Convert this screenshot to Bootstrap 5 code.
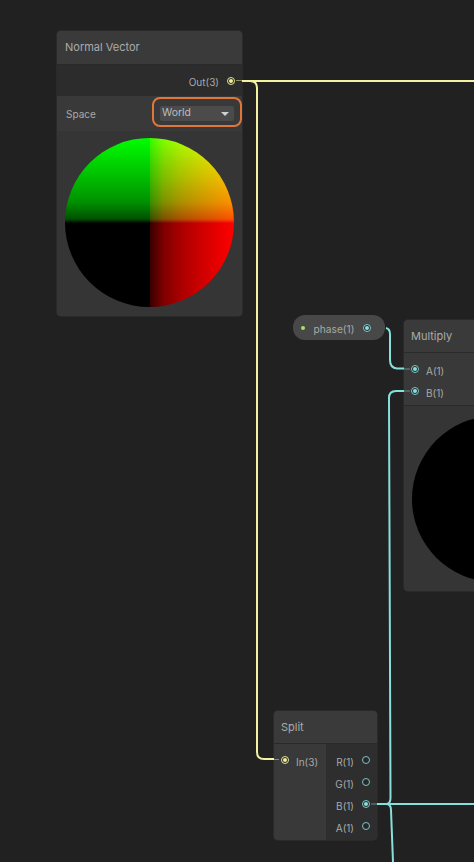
<!DOCTYPE html>
<html lang="en">
<head>
<meta charset="utf-8">
<title>Shader Graph</title>
<link href="https://cdn.jsdelivr.net/npm/bootstrap@5.3.0/dist/css/bootstrap.min.css" rel="stylesheet">
<style>
html,body{margin:0;height:100%;background:#212121;overflow:hidden}
.canvas-area{position:relative;width:474px;height:862px;overflow:hidden;background:#212121;font-family:Inter,"Liberation Sans",sans-serif;font-size:10px;color:#a9a9a9;line-height:1}
.wires{position:absolute;left:0;top:0;width:474px;height:862px;z-index:3;pointer-events:none}
.gnode{position:absolute;border-radius:4px;overflow:hidden;background:#353535;box-shadow:0 0 0 1px #2a2a2a;z-index:1}
.node-normal{left:57px;top:31px;width:185px;height:285px}
.node-multiply{left:404px;top:320px;width:185px;height:271px}
.node-split{left:274px;top:711px;width:103px;height:129px}
.node-pill{position:absolute;left:293px;top:315px;width:92px;height:25px;border-radius:12px;background:#484848;z-index:1;padding:0 14px 0 8px;font-size:10.2px}
.ghead{height:33px;background:#3a3a3a;border-bottom:1px solid #2a2a2a;padding-left:7px;font-size:11px;color:#ababab;flex:none}
.ghead-tall{height:34px;padding-left:8px}
.out-row{height:31px;background:#2c2c2c;padding-right:7px;gap:8px;flex:none}
.space-row{height:35px;background:#393939;padding:0 8px 0 9px;flex:none}
.combo{width:74px;height:15px;background:#4b4b4b;border-radius:2px;padding:0 5px 0 2px;font-size:10.4px;color:#bdbdbd}
.caret-tri{width:0;height:0;border-left:4px solid transparent;border-right:4px solid transparent;border-top:4px solid #d0d0d0}
.callout{position:absolute;left:95px;top:66px;width:90px;height:30px;border:2.5px solid #e0763a;border-radius:8px}
.preview-area{background:#353535;flex:1 1 auto;padding-top:7px}
.preview-mul{padding-top:10px;padding-left:8px}
.sphere-ball{width:169px;height:169px;border-radius:50%;background:#000}
.sphere-mul{width:166px;height:166px}
.sphere-normal{background-image:linear-gradient(to right,#000 50%,#380000 50.5%,#7c0000 58%,#a80000 68%,#cc0000 80%,#f00 100%),linear-gradient(to bottom,#0f0 0%,#00dc00 12%,#00b800 25%,#009000 38%,#005000 48%,#001800 49.8%,#000 50.200%);background-blend-mode:screen}
.port{display:inline-block;width:8px;height:8px;border-radius:50%;flex:none;background:#1f2b2e;border:1.5px solid #7fc9c9;position:relative}
.port::after{content:"";position:absolute;inset:1px;border-radius:50%;background:#8fdcdc}
.port-yellow{border-color:#e4e39a;background:#2a2a1e}
.port-yellow::after{background:#eeee9f}
.port-empty{border-color:#7fc4c8;background:#26282a}
.port-empty::after{display:none}
.mul-inputs{height:53px;background:#393939;border-bottom:1px solid #2a2a2a;padding:8px 0 0 7px;gap:6px;flex:none}
.port-row{height:16px;gap:7px}
.label-low{padding-top:3px}
.split-left{width:52px;background:#393939;padding:8px 0 0 7px}
.split-right{width:51px;background:#2e2e2e;padding:8px 7px 0 0;gap:6px}
.split-right .port-row{gap:8px}
.green-dot{width:4px;height:4px;border-radius:50%;background:#a5e06a}
</style>
</head>
<body>
<div class="canvas-area">
  <div class="gnode node-normal d-flex flex-column">
    <div class="ghead ghead-tall d-flex align-items-center">Normal Vector</div>
    <div class="out-row d-flex align-items-center justify-content-end"><span class="label-low">Out(3)</span><span class="port port-yellow"></span></div>
    <div class="space-row d-flex align-items-center justify-content-between"><span>Space</span>
      <div class="combo d-flex align-items-center justify-content-between"><span>World</span><span class="caret-tri"></span></div></div>
    <div class="preview-area d-flex justify-content-center"><div class="sphere-ball sphere-normal"></div></div>
    <div class="callout"></div>
  </div>

  <div class="node-pill d-flex align-items-center justify-content-between">
    <span class="green-dot"></span><span class="label-low">phase(1)</span><span class="port"></span>
  </div>

  <div class="gnode node-multiply d-flex flex-column">
    <div class="ghead d-flex align-items-center">Multiply</div>
    <div class="mul-inputs d-flex flex-column">
      <div class="port-row d-flex align-items-center"><span class="port"></span><span class="label-low">A(1)</span></div>
      <div class="port-row d-flex align-items-center"><span class="port"></span><span class="label-low">B(1)</span></div>
    </div>
    <div class="preview-area preview-mul d-flex"><div class="sphere-ball sphere-mul"></div></div>
  </div>

  <div class="gnode node-split d-flex flex-column">
    <div class="ghead d-flex align-items-center">Split</div>
    <div class="d-flex flex-grow-1">
      <div class="split-left"><div class="port-row d-flex align-items-center"><span class="port port-yellow"></span><span class="label-low">In(3)</span></div></div>
      <div class="split-right d-flex flex-column">
        <div class="port-row d-flex align-items-center justify-content-end"><span class="label-low">R(1)</span><span class="port port-empty"></span></div>
        <div class="port-row d-flex align-items-center justify-content-end"><span class="label-low">G(1)</span><span class="port port-empty"></span></div>
        <div class="port-row d-flex align-items-center justify-content-end"><span class="label-low">B(1)</span><span class="port"></span></div>
        <div class="port-row d-flex align-items-center justify-content-end"><span class="label-low">A(1)</span><span class="port port-empty"></span></div>
      </div>
    </div>
  </div>

  <svg class="wires" viewBox="0 0 474 862" fill="none">
    <path d="M236 80.500H242M274 759.500H279" stroke="#8e8e68" stroke-width="1"/>
    <path d="M242 81H474" stroke="#f2f2a0" stroke-width="2"/>
    <path d="M244 81H250Q257 81 257 88V752Q257 759 264 759H274" stroke="#f2f2a0" stroke-width="2"/>
    <path d="M371 804H378M404 369H410M404 391H410" stroke="#5f8f90" stroke-width="1"/>
    <path d="M377 804H474" stroke="#86e0dc" stroke-width="2"/>
    <path d="M386 328Q390 329 390 334V360Q390 368 397 368.500H404" stroke="#86e0dc" stroke-width="2"/>
    <path d="M404 391H396Q389 391 389 398L390.500 798Q390.500 804 386 804" stroke="#86e0dc" stroke-width="2"/>
    <path d="M386 804Q391 804 391 810L393 862" stroke="#86e0dc" stroke-width="2"/>
  </svg>
</div>
<script src="https://cdn.jsdelivr.net/npm/bootstrap@5.3.0/dist/js/bootstrap.bundle.min.js"></script>
</body>
</html>
